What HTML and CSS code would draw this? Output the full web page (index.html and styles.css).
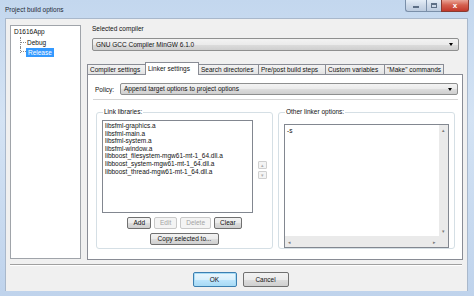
FILE: index.html
```html
<!DOCTYPE html>
<html lang="en">
<head>
  <meta charset="UTF-8">
  <title>Project build options</title>
  <link rel="stylesheet" href="styles.css">
</head>
<body>
<div class="window">
  <div class="titlebar">
    <span class="title">Project build options</span>
    <div class="caption-btns">
      <span class="cap-btn cap-min"><i></i></span>
      <span class="cap-btn cap-max"><i></i></span>
      <span class="cap-btn cap-close">x</span>
    </div>
  </div>

  <div class="client">
    <div class="main">
      <div class="tree">
        <div class="node root">D1616App</div>
        <div class="node child"><span class="branch"></span><span class="node-label">Debug</span></div>
        <div class="node child last"><span class="branch"></span><span class="node-label selected">Release</span></div>
      </div>

      <div class="right">
        <div class="field-label">Selected compiler</div>
        <div class="combo compiler">GNU GCC Compiler MinGW 6.1.0<span class="arrow"></span></div>

        <div class="tabs">
          <span class="tab first">Compiler settings</span>
          <span class="tab active">Linker settings</span>
          <span class="tab">Search directories</span>
          <span class="tab">Pre/post build steps</span>
          <span class="tab">Custom variables</span>
          <span class="tab">"Make" commands</span>
        </div>

        <div class="tabpanel">
          <div class="policy-row">
            <span class="policy-label">Policy:</span>
            <div class="combo policy">Append target options to project options<span class="arrow"></span></div>
          </div>
          <div class="sep"></div>

          <div class="groups">
            <fieldset class="group">
              <legend>Link libraries:</legend>
              <div class="list-row">
                <div class="listbox">
                  <div>libsfml-graphics.a</div>
                  <div>libsfml-main.a</div>
                  <div>libsfml-system.a</div>
                  <div>libsfml-window.a</div>
                  <div>libboost_filesystem-mgw61-mt-1_64.dll.a</div>
                  <div>libboost_system-mgw61-mt-1_64.dll.a</div>
                  <div>libboost_thread-mgw61-mt-1_64.dll.a</div>
                </div>
                <div class="updown">
                  <span class="mini-btn">&#9652;</span>
                  <span class="mini-btn">&#9662;</span>
                </div>
              </div>
              <div class="btn-row">
                <span class="btn">Add</span>
                <span class="btn disabled">Edit</span>
                <span class="btn disabled">Delete</span>
                <span class="btn">Clear</span>
              </div>
              <div class="btn-row">
                <span class="btn">Copy selected to...</span>
              </div>
            </fieldset>

            <fieldset class="group">
              <legend>Other linker options:</legend>
              <div class="textarea">
                <div class="text-body">
                  <div class="text-content">-s</div>
                  <div class="vscroll"><span>&#9652;</span><span>&#9662;</span></div>
                </div>
                <div class="hscroll"><span>&#9666;</span><span>&#9656;</span></div>
              </div>
            </fieldset>
          </div>
        </div>
      </div>
    </div>

    <div class="hr"></div>

    <div class="footer">
      <span class="btn big default">OK</span>
      <span class="btn big">Cancel</span>
    </div>
  </div>
</div>
</body>
</html>
```

FILE: styles.css
```css
* {
  margin: 0;
  padding: 0;
  box-sizing: border-box;
}

body {
  width: 474px;
  height: 296px;
  overflow: hidden;
  font-family: 'Liberation Sans', Arial, sans-serif;
  font-size: 6.5px;
  color: #111;
}

.window {
  width: 474px;
  height: 296px;
  background: linear-gradient(180deg, #c3d7ee 0%, #d4e3f4 40%, #bfd3ec 100%);
  display: flex;
  flex-direction: column;
}

/* title bar */
.titlebar {
  height: 18px;
  display: flex;
  align-items: flex-start;
  justify-content: space-between;
  padding-left: 5px;
}

.title {
  margin-top: 6px;
  line-height: 8px;
  color: #1e2a38;
}

.caption-btns {
  display: flex;
  margin-right: 5px;
  height: 12px;
}

.cap-btn {
  display: flex;
  align-items: center;
  justify-content: center;
  height: 12px;
  border: 1px solid #7a8fa9;
  border-top: none;
  background: linear-gradient(180deg, #e4edf7 0%, #cdd9e8 50%, #bccbdf 100%);
}

.cap-min {
  width: 21px;
  border-radius: 0 0 0 3px;
  border-right: none;
}

.cap-min i {
  width: 6px;
  height: 2px;
  margin-top: 3px;
  background: #5d6f86;
}

.cap-max {
  width: 15px;
  border-right: none;
}

.cap-max i {
  width: 6px;
  height: 5px;
  border: 1px solid #5d6f86;
  border-top-width: 2px;
}

.cap-close {
  width: 28px;
  border-color: #8a3a30;
  border-radius: 0 0 3px 0;
  background: linear-gradient(180deg, #e9a597 0%, #d5614f 45%, #c2382a 100%);
  color: #fff;
  font-weight: bold;
  font-size: 8px;
  line-height: 10px;
}

/* client area */
.client {
  margin-left: 5px;
  width: 463px;
  height: 273px;
  background: #f0f0f0;
  border: 1px solid #a9b8cb;
  border-bottom: none;
}

.main {
  display: flex;
  padding-top: 6px;
  padding-left: 4px;
  gap: 6px;
}

.tree {
  width: 71px;
  height: 234px;
  background: #fff;
  border: 1px solid #a0a4aa;
  padding: 1px 0 0 3px;
}

.node {
  height: 10px;
  line-height: 10px;
  display: flex;
  align-items: center;
}

.child {
  padding-left: 6px;
}

.branch {
  width: 6px;
  height: 10px;
  border-left: 1px dotted #8a8a8a;
  position: relative;
}

.branch:after {
  content: "";
  position: absolute;
  left: 0;
  top: 5px;
  width: 5px;
  border-top: 1px dotted #8a8a8a;
}

.last .branch {
  height: 6px;
  align-self: flex-start;
}

.last .branch:after {
  top: 4px;
}

.node-label {
  padding: 0 1px;
  line-height: 9px;
}

.selected {
  background: #3399ff;
  color: #fff;
  padding: 0 2px;
}

.right {
  width: 376px;
  display: flex;
  flex-direction: column;
}

.field-label {
  margin-left: 5px;
  margin-top: 0;
  line-height: 8px;
}

.combo {
  position: relative;
  height: 13px;
  line-height: 11px;
  padding-left: 3px;
  border: 1px solid #8e8f8f;
  border-radius: 2px;
  background: linear-gradient(180deg, #f3f3f3 0%, #ebebeb 50%, #dddddd 51%, #cfcfcf 100%);
}

.combo .arrow {
  position: absolute;
  right: 5px;
  top: 4px;
  border-left: 2.5px solid transparent;
  border-right: 2.5px solid transparent;
  border-top: 3px solid #000;
}

.compiler {
  margin: 5px 4px 0 5px;
}

/* tabs */
.tabs {
  display: flex;
  align-items: flex-end;
  height: 12px;
  margin-top: 11px;
  position: relative;
  z-index: 1;
}

.tab {
  height: 10px;
  line-height: 9px;
  padding: 0 2px;
  border: 1px solid #898c95;
  border-bottom: none;
  border-left: none;
  background: linear-gradient(180deg, #f3f3f3 0%, #e3e3e3 100%);
  white-space: nowrap;
}

.tab.first {
  border-left: 1px solid #898c95;
  width: 59px;
}

.tab:nth-child(2) { width: 54px; }
.tab:nth-child(3) { width: 60px; }
.tab:nth-child(4) { width: 67px; }
.tab:nth-child(5) { width: 59px; }
.tab:nth-child(6) { width: 59px; }

.tab.active {
  height: 13px;
  margin-bottom: -1px;
  margin-left: -1px;
  border-left: 1px solid #898c95;
  background: #fff;
  line-height: 11px;
}

.tabpanel {
  height: 186px;
  border: 1px solid #898c95;
  background: #fff;
  padding: 8px 4px 0 5px;
}

.policy-row {
  display: flex;
  align-items: center;
}

.policy-label {
  width: 27px;
  padding-left: 2px;
}

.combo.policy {
  flex: 1;
  height: 12px;
  line-height: 10px;
}

.sep {
  margin-top: 4px;
  height: 1px;
  background: #d5d5d5;
}

.groups {
  display: flex;
  gap: 5px;
  margin: 8px 4px 0 3px;
}

.group {
  width: 178px;
  height: 141px;
  border: 1px solid #d5dfe5;
  border-radius: 3px;
  padding: 4px 5px 0 5px;
}

.group + .group {
  width: 177px;
}

.group legend {
  line-height: 8px;
  padding: 0 1px;
  margin-left: 1px;
}

.list-row {
  display: flex;
  align-items: center;
  gap: 5px;
}

.listbox {
  width: 151px;
  height: 93px;
  border: 1px solid #828790;
  padding: 1px 2px;
  line-height: 7.6px;
  white-space: nowrap;
}

.updown {
  display: flex;
  flex-direction: column;
  gap: 2px;
  margin-top: 6px;
}

.mini-btn {
  width: 9px;
  height: 8px;
  border: 1px solid #cfcfcf;
  border-radius: 1px;
  background: #f4f4f4;
  color: #b0b0b0;
  font-size: 5px;
  line-height: 6px;
  text-align: center;
}

.btn-row {
  display: flex;
  justify-content: center;
  gap: 3px;
  margin-top: 4px;
}

.btn-row + .btn-row {
  margin-top: 4px;
}

.btn {
  height: 12px;
  line-height: 10px;
  padding: 0 5px;
  border: 1px solid #707070;
  border-radius: 2px;
  background: linear-gradient(180deg, #f2f2f2 0%, #ebebeb 50%, #dddddd 51%, #cfcfcf 100%);
  text-align: center;
  white-space: nowrap;
}

.btn-row .btn:nth-child(1) { min-width: 22px; }
.btn-row .btn:nth-child(2) { min-width: 22px; }
.btn-row .btn:nth-child(3) { min-width: 30px; }
.btn-row .btn:nth-child(4) { min-width: 27px; }
.btn-row + .btn-row .btn { width: 69px; }

.btn.disabled {
  color: #a3a3a3;
  border-color: #c9c9c9;
  background: #f4f4f4;
}

.textarea {
  margin-top: 4px;
  width: 165px;
  height: 124px;
  border: 1px solid #828790;
  display: flex;
  flex-direction: column;
}

.text-body {
  flex: 1;
  display: flex;
}

.text-content {
  flex: 1;
  padding: 2px 2px;
  line-height: 8px;
}

.vscroll {
  width: 9px;
  background: #eaeaea;
  display: flex;
  flex-direction: column;
  justify-content: space-between;
  align-items: center;
  color: #7a7a7a;
  font-size: 5px;
  padding: 2px 0;
}

.hscroll {
  height: 11px;
  margin-right: 0;
  background: #eaeaea;
  display: flex;
  justify-content: space-between;
  align-items: center;
  color: #7a7a7a;
  font-size: 5px;
  padding: 0 12px 0 3px;
}

.hr {
  margin: 4px 5px 0 4px;
  height: 2px;
  border-top: 1px solid #a0a0a0;
  border-bottom: 1px solid #fff;
}

.footer {
  display: flex;
  justify-content: center;
  gap: 6px;
  padding-left: 8px;
  margin-top: 6px;
}

.btn.big {
  height: 15px;
  line-height: 13px;
}

.footer .btn:first-child {
  width: 44px;
}

.footer .btn:last-child {
  width: 46px;
}

.btn.default {
  border-color: #3c7fb1;
  box-shadow: inset 0 0 0 1px #a8dcf5;
  background: linear-gradient(180deg, #eaf6fd 0%, #d9f0fc 50%, #bee6fd 51%, #a7d9f5 100%);
}
```
